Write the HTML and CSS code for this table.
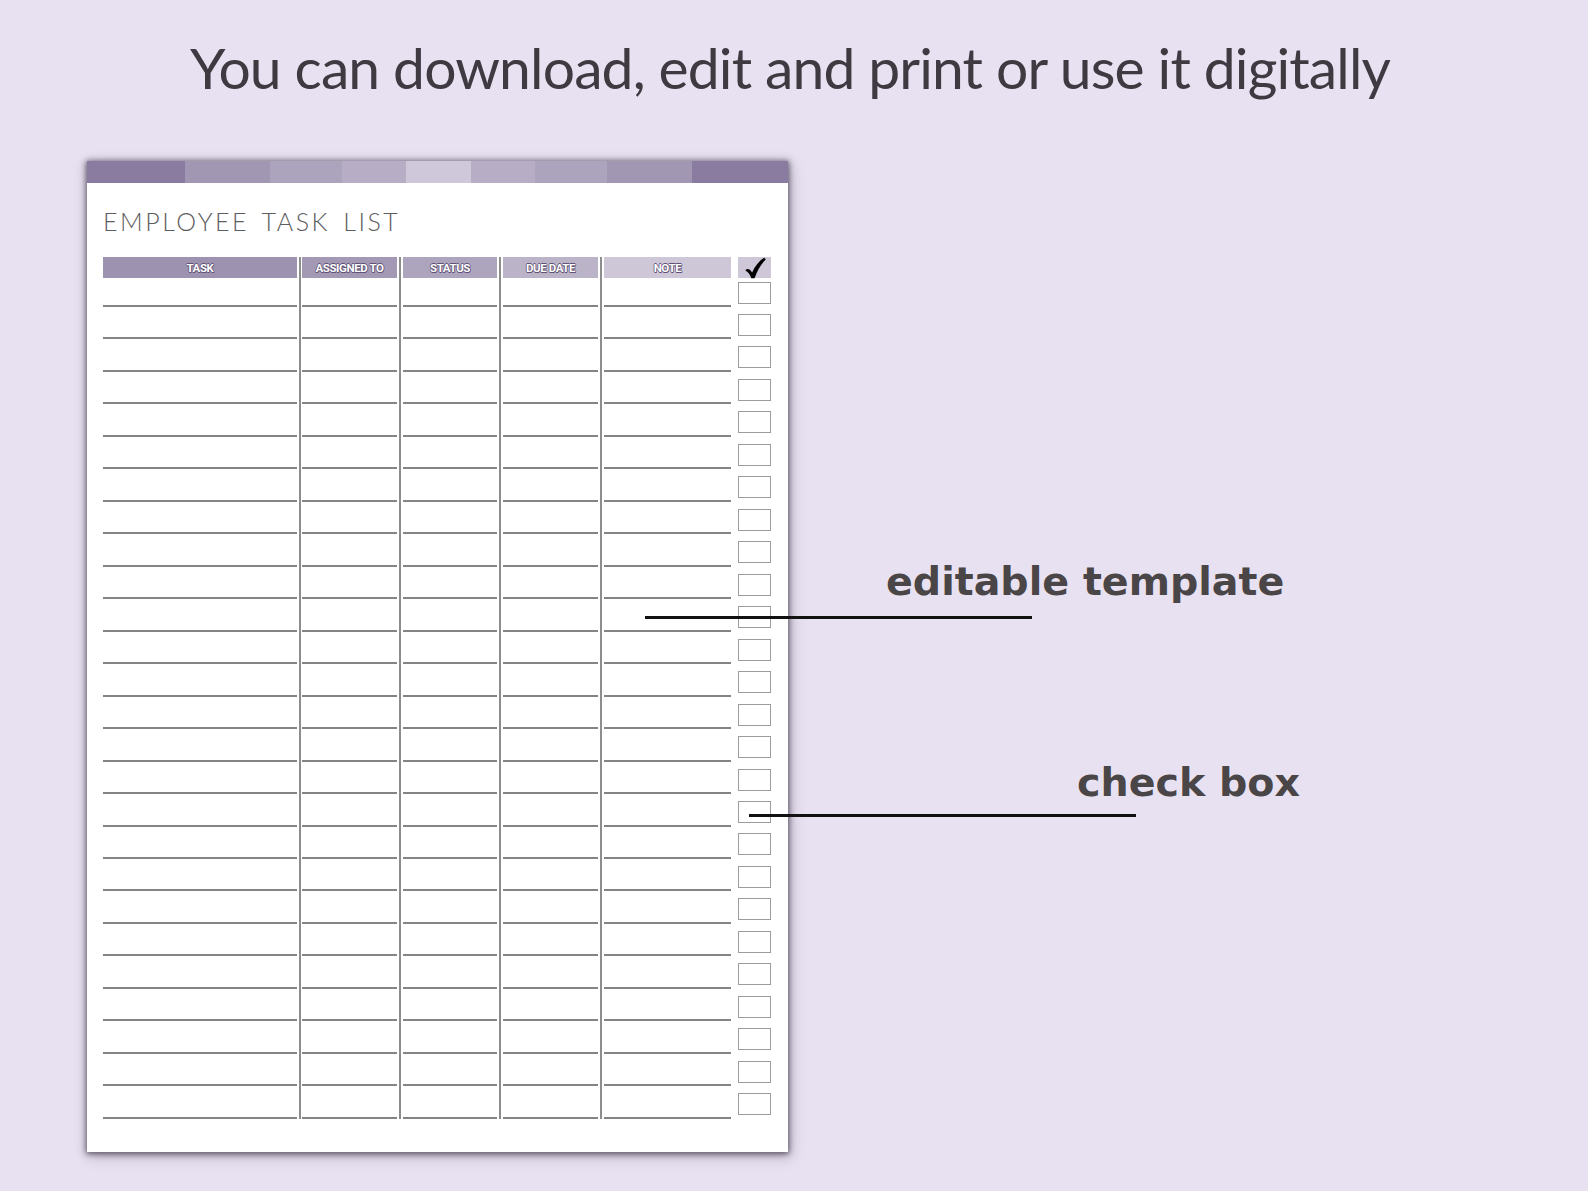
FILE: index.html
```html
<!DOCTYPE html>
<html lang="en">
<head>
<meta charset="utf-8">
<title>Employee Task List</title>
<link rel="stylesheet" href="styles.css">
</head>
<body>
<div class="stage">
  <h1 class="headline">You can download, edit and print or use it digitally</h1>

  <div class="paper">
    <div class="bar">
      <span class="seg s1"></span><span class="seg s2"></span><span class="seg s3"></span><span class="seg s4"></span><span class="seg s5"></span><span class="seg s4 w6"></span><span class="seg s3"></span><span class="seg s2"></span><span class="seg s1 w9"></span>
    </div>
    <h2 class="title">EMPLOYEE TASK LIST</h2>

    <div class="table">
      <div class="col task">
        <div class="hd hd-task">TASK</div>
        <div class="cell first"></div><div class="cell"></div><div class="cell"></div><div class="cell"></div><div class="cell"></div><div class="cell"></div><div class="cell"></div><div class="cell"></div><div class="cell"></div><div class="cell"></div><div class="cell"></div><div class="cell"></div><div class="cell"></div><div class="cell"></div><div class="cell"></div><div class="cell"></div><div class="cell"></div><div class="cell"></div><div class="cell"></div><div class="cell"></div><div class="cell"></div><div class="cell"></div><div class="cell"></div><div class="cell"></div><div class="cell"></div><div class="cell"></div>
      </div>
      <div class="sep sep-narrow"></div>
      <div class="col assigned">
        <div class="hd hd-assigned">ASSIGNED TO</div>
        <div class="cell first"></div><div class="cell"></div><div class="cell"></div><div class="cell"></div><div class="cell"></div><div class="cell"></div><div class="cell"></div><div class="cell"></div><div class="cell"></div><div class="cell"></div><div class="cell"></div><div class="cell"></div><div class="cell"></div><div class="cell"></div><div class="cell"></div><div class="cell"></div><div class="cell"></div><div class="cell"></div><div class="cell"></div><div class="cell"></div><div class="cell"></div><div class="cell"></div><div class="cell"></div><div class="cell"></div><div class="cell"></div><div class="cell"></div>
      </div>
      <div class="sep"></div>
      <div class="col status">
        <div class="hd hd-status">STATUS</div>
        <div class="cell first"></div><div class="cell"></div><div class="cell"></div><div class="cell"></div><div class="cell"></div><div class="cell"></div><div class="cell"></div><div class="cell"></div><div class="cell"></div><div class="cell"></div><div class="cell"></div><div class="cell"></div><div class="cell"></div><div class="cell"></div><div class="cell"></div><div class="cell"></div><div class="cell"></div><div class="cell"></div><div class="cell"></div><div class="cell"></div><div class="cell"></div><div class="cell"></div><div class="cell"></div><div class="cell"></div><div class="cell"></div><div class="cell"></div>
      </div>
      <div class="sep"></div>
      <div class="col due">
        <div class="hd hd-due">DUE DATE</div>
        <div class="cell first"></div><div class="cell"></div><div class="cell"></div><div class="cell"></div><div class="cell"></div><div class="cell"></div><div class="cell"></div><div class="cell"></div><div class="cell"></div><div class="cell"></div><div class="cell"></div><div class="cell"></div><div class="cell"></div><div class="cell"></div><div class="cell"></div><div class="cell"></div><div class="cell"></div><div class="cell"></div><div class="cell"></div><div class="cell"></div><div class="cell"></div><div class="cell"></div><div class="cell"></div><div class="cell"></div><div class="cell"></div><div class="cell"></div>
      </div>
      <div class="sep"></div>
      <div class="col note">
        <div class="hd hd-note">NOTE</div>
        <div class="cell first"></div><div class="cell"></div><div class="cell"></div><div class="cell"></div><div class="cell"></div><div class="cell"></div><div class="cell"></div><div class="cell"></div><div class="cell"></div><div class="cell"></div><div class="cell"></div><div class="cell"></div><div class="cell"></div><div class="cell"></div><div class="cell"></div><div class="cell"></div><div class="cell"></div><div class="cell"></div><div class="cell"></div><div class="cell"></div><div class="cell"></div><div class="cell"></div><div class="cell"></div><div class="cell"></div><div class="cell"></div><div class="cell"></div>
      </div>
      <div class="col check">
        <div class="hd hd-check">
          <svg class="tick" viewBox="0 0 20 20" width="22" height="22"><path d="M1.5 11.6 C3.6 10.2 5.4 11 7.4 14 C10.2 8.2 13.6 3.6 18.4 0.6 L19.8 2.2 C15.4 6.6 12 12.4 9.6 19.4 L6.6 19.4 C5.6 16.2 4 13.8 1.5 12.6 Z" fill="#000"/></svg>
        </div>
        <div class="boxes">
          <span class="box"></span><span class="box"></span><span class="box"></span><span class="box"></span><span class="box"></span><span class="box"></span><span class="box"></span><span class="box"></span><span class="box"></span><span class="box"></span><span class="box"></span><span class="box"></span><span class="box"></span><span class="box"></span><span class="box"></span><span class="box"></span><span class="box"></span><span class="box"></span><span class="box"></span><span class="box"></span><span class="box"></span><span class="box"></span><span class="box"></span><span class="box"></span><span class="box"></span><span class="box"></span>
        </div>
      </div>
    </div>
  </div>

  <div class="callout callout-edit">
    <span class="callout-text">editable template</span>
    <span class="callout-line"></span>
  </div>
  <div class="callout callout-check">
    <span class="callout-text">check box</span>
    <span class="callout-line"></span>
  </div>
</div>
</body>
</html>
```

FILE: styles.css
```css
* { box-sizing: border-box; }

html, body {
  margin: 0;
  padding: 0;
  background: #e8e1f1;
}

.stage {
  position: relative;
  width: 1588px;
  height: 1191px;
  padding-top: 37px;
  overflow: hidden;
}

.headline {
  margin: 0;
  font-family: "Lato", "Liberation Sans", sans-serif;
  font-weight: 400;
  font-size: 57px;
  line-height: 60px;
  letter-spacing: -0.85px;
  color: #3f3a41;
  text-align: center;
  padding-right: 8px;
}

/* ---------- paper ---------- */
.paper {
  margin: 64px 0 0 87px;
  width: 701px;
  height: 991px;
  background: #fff;
  box-shadow: 0 1px 6px 1px rgba(55, 45, 65, 0.75), 2px 4px 14px rgba(40, 30, 50, 0.25);
  display: flex;
  flex-direction: column;
}

.bar {
  display: flex;
  height: 22px;
}
.seg { display: block; height: 100%; }
.s1 { width: 98px; background: #8a7ca0; }
.s2 { width: 85px; background: #a197b2; }
.s3 { width: 72px; background: #aca3bd; }
.s4 { width: 64px; background: #b7aec6; }
.s5 { width: 65px; background: #cfc8da; }
.w6 { width: 64px; }
.w9 { width: 96px; }

.title {
  margin: 26px 0 0 16px;
  font-family: "Lato", "Liberation Sans", sans-serif;
  font-weight: 300;
  font-size: 25px;
  line-height: 25px;
  letter-spacing: 2.5px;
  word-spacing: 4px;
  color: #5d5d60;
}

/* ---------- table ---------- */
.table {
  display: flex;
  margin: 23px 0 0 16px;
}

.col { display: flex; flex-direction: column; }
.task { width: 194px; }
.assigned { width: 95px; }
.status { width: 94px; }
.due { width: 95px; }
.note { width: 127px; }
.check { width: 33px; margin-left: 7px; }

.sep {
  width: 6px;
  display: flex;
  justify-content: center;
}
.sep-narrow { width: 5px; }
.sep::before {
  content: "";
  width: 2px;
  height: 100%;
  background: #8d8d8d;
}

.hd {
  height: 21px;
  display: flex;
  align-items: center;
  justify-content: center;
  font-family: "Roboto", "Liberation Sans", sans-serif;
  font-weight: 700;
  font-size: 11.5px;
  letter-spacing: -0.4px;
  color: #fff;
  text-shadow: -0.7px 0 #5f5274, 0.7px 0 #5f5274, 0 0.7px #5f5274, 0 -0.7px #5f5274, 0.5px 0.5px #5f5274;
}
.hd-task { background: #9d92b0; }
.hd-assigned { background: #a399b5; }
.hd-status { background: #ada4be; }
.hd-due { background: #bbb4c9; }
.hd-note { background: #cdc7d8; }
.hd-check { background: #cdc7d8; }

.tick { display: block; }

.cell {
  height: 32.48px;
  border-bottom: 2px solid #848484;
}
.cell.first { height: 29px; }

.boxes {
  display: flex;
  flex-direction: column;
  gap: 10.48px;
  padding-top: 3.5px;
}
.box {
  display: block;
  height: 22px;
  border: 1.5px solid #9c9c9c;
  background: #fff;
}

/* ---------- callouts ---------- */
.callout {
  position: absolute;
  left: 0;
  top: 0;
}
.callout-text {
  position: absolute;
  font-family: "DejaVu Sans", "Open Sans", sans-serif;
  font-weight: 700;
  font-size: 39.6px;
  line-height: 40px;
  color: #4a4547;
  white-space: nowrap;
}
.callout-line {
  position: absolute;
  height: 3px;
  background: #111;
}

.callout-edit .callout-text { left: 886px; top: 561px; }
.callout-edit .callout-line { left: 645px; top: 616px; width: 387px; }

.callout-check .callout-text { left: 1077px; top: 762px; }
.callout-check .callout-line { left: 749px; top: 814px; width: 387px; }
```
